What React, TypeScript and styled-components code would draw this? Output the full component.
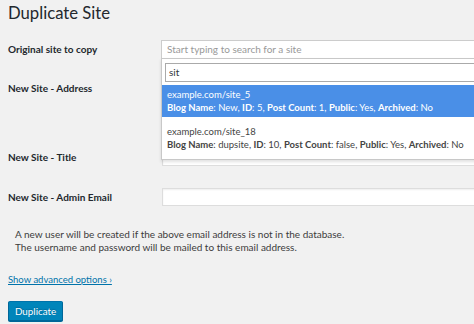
import React from "react";
import styled, { createGlobalStyle } from "styled-components";

const Global = createGlobalStyle`
  html, body { margin: 0; padding: 0; background: #f1f1f1; overflow: hidden; }
  body { font-family: Lato, "Open Sans", sans-serif; font-size: 10px; color: #444; }
`;

const Page = styled.div`
  position: relative;
  padding: 0 0 0 8px;
  width: 466px;
  height: 324px;
  overflow: hidden;
`;

const Title = styled.h1`
  margin: 0;
  height: 30px;
  padding-top: 2px;
  box-sizing: border-box;
  font-size: 16.7px;
  font-weight: 400;
  line-height: 22px;
  color: #23282d;
`;

const Row = styled.div<{ $top: number; $bottom: number }>`
  display: grid;
  grid-template-columns: 153px 1fr;
  align-items: start;
  padding: ${(p) => p.$top}px 0 ${(p) => p.$bottom}px;
`;

const Label = styled.label`
  font-weight: 700;
  font-size: 10px;
  line-height: 19px;
  color: #23282d;
`;

const SelectBox = styled.div`
  width: 330px;
  height: 19px;
  box-sizing: border-box;
  border: 1px solid #ccc;
  background: #fff;
  color: #999;
  padding-left: 5px;
  line-height: 17px;
  font-size: 10px;
`;

const TextInput = styled.div`
  margin-left: 1px;
  width: 330px;
  height: 18px;
  box-sizing: border-box;
  border: 1px solid #ddd;
  background: #fff;
  box-shadow: inset 0 1px 2px rgba(0, 0, 0, 0.07);
`;

const Help = styled.p`
  margin: 11px 0 0 7px;
  line-height: 13px;
  color: #3c3c3c;
`;

const Link = styled.a`
  display: block;
  margin-top: 19px;
  font-size: 9.5px;
  line-height: 13px;
  color: #0073aa;
  text-decoration: underline;
  width: max-content;
`;

const Button = styled.button`
  display: block;
  margin-top: 15px;
  height: 20px;
  padding: 0 6px;
  font-family: inherit;
  font-size: 9.8px;
  color: #fff;
  background: #0085ba;
  border: 1px solid;
  border-color: #0073aa #006799 #006799;
  border-radius: 2px;
  box-shadow: 0 1px 0 #006799;
  text-shadow: 0 -1px 1px #006799;
  line-height: 17px;
`;

const Dropdown = styled.div`
  position: absolute;
  left: 161px;
  top: 58px;
  width: 330px;
  box-sizing: border-box;
  background: #fff;
  border: 1px solid #c8c8c8;
  box-shadow: 0 2px 3px rgba(0, 0, 0, 0.12);
`;

const Search = styled.div`
  margin: 4px 4px 3px 3px;
  height: 19px;
  box-sizing: border-box;
  border: 1px solid #aaa;
  padding-left: 3px;
  line-height: 17px;
  color: #32373c;
`;

const Option = styled.div<{ $active?: boolean; $pad: number }>`
  padding: ${(p) => p.$pad}px 5px;
  font-size: 9.5px;
  line-height: 13px;
  background: ${(p) => (p.$active ? "#4a8fe7" : "#fff")};
  color: ${(p) => (p.$active ? "#fff" : "#444")};
  white-space: nowrap;
  b { font-weight: 700; }
`;

const options = [
  { url: "example.com/site_5", name: "New", id: 5, count: "1", active: true, pad: 3 },
  { url: "example.com/site_18", name: "dupsite", id: 10, count: "false", active: false, pad: 8 },
];

export default function App() {
  return (
    <Page>
      <Global />
      <Title>Duplicate Site</Title>
      <Row $top={10} $bottom={10}>
        <Label>Original site to copy</Label>
        <SelectBox>Start typing to search for a site</SelectBox>
      </Row>
      <Row $top={10} $bottom={40}>
        <Label>New Site - Address</Label>
        <TextInput />
      </Row>
      <Row $top={10} $bottom={10}>
        <Label>New Site - Title</Label>
        <TextInput />
      </Row>
      <Row $top={11} $bottom={10}>
        <Label>New Site - Admin Email</Label>
        <TextInput />
      </Row>
      <Help>
        A new user will be created if the above email address is not in the database.
        <br />
        The username and password will be mailed to this email address.
      </Help>
      <Link href="#">Show advanced options ›</Link>
      <Button>Duplicate</Button>
      <Dropdown>
        <Search>sit</Search>
        {options.map((o) => (
          <Option key={o.url} $active={o.active} $pad={o.pad}>
            {o.url}
            <br />
            <b>Blog Name</b>: {o.name}, <b>ID</b>: {o.id}, <b>Post Count</b>: {o.count},{" "}
            <b>Public</b>: Yes, <b>Archived</b>: No
          </Option>
        ))}
      </Dropdown>
    </Page>
  );
}
